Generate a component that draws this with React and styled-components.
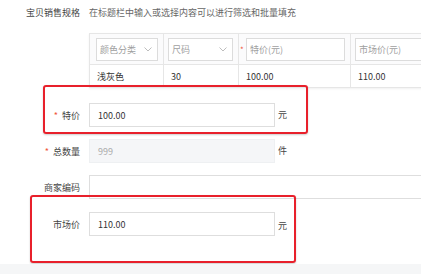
import styled, { createGlobalStyle } from "styled-components"

const GlobalStyle = createGlobalStyle`
    html, body {
        margin: 0;
        padding: 0;
        background: #fff;
    }
    body {
        font-family: "Noto Sans CJK SC", "Noto Sans", sans-serif;
        font-size: 9px;
        line-height: 13px;
        color: #333;
    }
`

const Page = styled.div`
    position: relative;
    width: 421px;
    height: 274px;
    overflow: hidden;
    background: #fff;
`

const Row = styled.div`
    display: grid;
    grid-template-columns: 80px 1fr;
    column-gap: 9px;
    align-items: center;
    margin-top: ${p => p.$top || 0}px;
`

const Label = styled.div`
    text-align: right;
    color: #444;
    font-size: 9px;
    white-space: nowrap;
`

const Star = styled.span`
    color: #f0563c;
    margin-right: 4px;
`

const Hint = styled.div`
    color: #666;
    font-size: 9px;
`

const Table = styled.div`
    display: grid;
    grid-template-columns: 74px 75px 112px 130px;
    border: 1px solid #e6e6e6;
    border-right: none;
    box-shadow: 0 1px 2px rgba(0, 0, 0, 0.06);
    width: max-content;
`

const HeadCell = styled.div`
    display: flex;
    align-items: center;
    height: 31px;
    padding: 0 ${p => p.$right || 5}px 0 ${p => p.$left || 6}px;
    border-right: 1px solid #e6e6e6;
    border-bottom: 1px solid #e6e6e6;
    background: #fbfbfc;
    box-sizing: border-box;
`

const HeadBox = styled.div`
    flex: 1;
    height: 23px;
    display: flex;
    align-items: center;
    justify-content: space-between;
    padding: 0 5px 0 3px;
    border: 1px solid #dcdcdc;
    background: #fff;
    color: #a0a0a0;
    box-sizing: border-box;
`

const HeadStar = styled.span`
    color: #f0563c;
    width: 6px;
    font-size: 8px;
`

const Cell = styled.div`
    height: 22px;
    display: flex;
    align-items: center;
    padding-left: 7px;
    border-right: 1px solid #e6e6e6;
    color: #333;
`

const Field = styled.div`
    display: flex;
    align-items: center;
    gap: 3px;
`

const Input = styled.div`
    width: ${p => p.$wide ? "360px" : "186px"};
    height: 24px;
    box-sizing: border-box;
    display: flex;
    align-items: center;
    padding-left: 8px;
    border: 1px solid ${p => p.$disabled ? "#eef0f2" : "#dedede"};
    background: ${p => p.$disabled ? "#f5f6f8" : "#fff"};
    color: ${p => p.$disabled ? "#aaa" : "#333"};
    flex-shrink: 0;
`

const Unit = styled.span`
    color: #444;
    margin-top: ${p => p.$low ? 2 : -2}px;
`

const Footer = styled.div`
    position: absolute;
    left: 0;
    right: 0;
    bottom: 0;
    height: 10px;
    background: #f5f6f7;
`

const Mark = styled.div`
    position: absolute;
    left: ${p => p.$x}px;
    top: ${p => p.$y}px;
    width: ${p => p.$w}px;
    height: ${p => p.$h}px;
    border: 2px solid #e8202b;
    border-radius: 3px;
    box-sizing: border-box;
    box-shadow: 0 1px 2px rgba(0, 0, 0, 0.2);
    pointer-events: none;
`

function Chevron() {
    return (
        <svg width="8" height="5" viewBox="0 0 8 5">
            <path d="M0.5 0.5 L4 4 L7.5 0.5" fill="none" stroke="#b5b5b5" strokeWidth="0.9" />
        </svg>
    )
}

export default function App() {
    return (
        <Page>
            <GlobalStyle />
            <Row $top={6}>
                <Label>宝贝销售规格</Label>
                <Hint>在标题栏中输入或选择内容可以进行筛选和批量填充</Hint>
            </Row>
            <Row $top={14}>
                <div />
                <Table>
                    <HeadCell>
                        <HeadBox>颜色分类<Chevron /></HeadBox>
                    </HeadCell>
                    <HeadCell $left={4}>
                        <HeadBox>尺码<Chevron /></HeadBox>
                    </HeadCell>
                    <HeadCell $left={1}>
                        <HeadStar>*</HeadStar>
                        <HeadBox>特价(元)</HeadBox>
                    </HeadCell>
                    <HeadCell $left={4}>
                        <HeadBox>市场价(元)</HeadBox>
                    </HeadCell>
                    <Cell>浅灰色</Cell>
                    <Cell>30</Cell>
                    <Cell>100.00</Cell>
                    <Cell>110.00</Cell>
                </Table>
            </Row>
            <Row $top={15}>
                <Label><Star>*</Star>特价</Label>
                <Field>
                    <Input>100.00</Input>
                    <Unit>元</Unit>
                </Field>
            </Row>
            <Row $top={12}>
                <Label><Star>*</Star>总数量</Label>
                <Field>
                    <Input $disabled>999</Input>
                    <Unit>件</Unit>
                </Field>
            </Row>
            <Row $top={12}>
                <Label>商家编码</Label>
                <Field>
                    <Input $wide />
                </Field>
            </Row>
            <Row $top={13}>
                <Label>市场价</Label>
                <Field>
                    <Input>110.00</Input>
                    <Unit $low>元</Unit>
                </Field>
            </Row>
            <Mark $x={43} $y={85} $w={265} $h={49} />
            <Mark $x={30} $y={195} $w={266} $h={68} />
            <Footer />
        </Page>
    )
}
